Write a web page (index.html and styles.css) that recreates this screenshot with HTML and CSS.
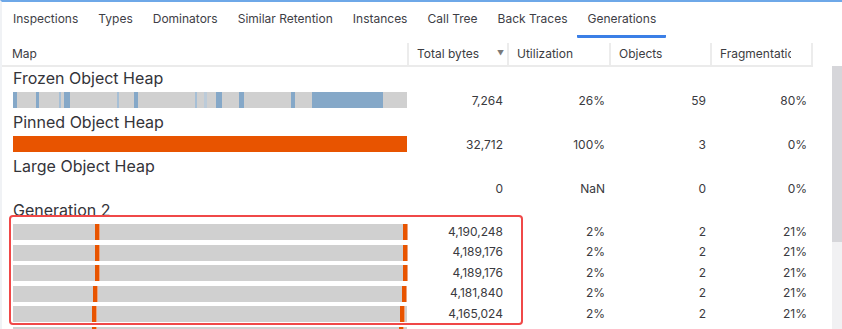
FILE: index.html
```html
<!DOCTYPE html>
<html lang="en">
<head>
    <meta charset="UTF-8">
    <title>Generations</title>
    <link rel="stylesheet" href="styles.css">
</head>
<body>
    <div class="app">
        <nav class="tabs">
            <span class="tab">Inspections</span>
            <span class="tab">Types</span>
            <span class="tab">Dominators</span>
            <span class="tab">Similar Retention</span>
            <span class="tab">Instances</span>
            <span class="tab">Call Tree</span>
            <span class="tab">Back Traces</span>
            <span class="tab active">Generations</span>
        </nav>

        <div class="grid-wrap">
            <div class="table">
                <div class="row head">
                    <div class="th"><span class="label">Map</span></div>
                    <div class="th"><span class="label">Total bytes</span><span class="sort">&#9660;</span></div>
                    <div class="th"><span class="label">Utilization</span></div>
                    <div class="th"><span class="label">Objects</span></div>
                    <div class="th"><span class="label">Fragmentation</span></div>
                </div>

                <div class="group-title">Frozen Object Heap</div>
                <div class="row">
                    <div class="map">
                        <div class="bar">
                            <span class="seg" style="left:0;width:4px"></span>
                            <span class="seg" style="left:23px;width:3px"></span>
                            <span class="seg light" style="left:46px;width:2px"></span>
                            <span class="seg" style="left:51px;width:6px"></span>
                            <span class="seg light" style="left:104px;width:2px"></span>
                            <span class="seg" style="left:121px;width:4px"></span>
                            <span class="seg light" style="left:182px;width:2px"></span>
                            <span class="seg faint" style="left:191px;width:3px"></span>
                            <span class="seg" style="left:203px;width:6px"></span>
                            <span class="seg" style="left:226px;width:5px"></span>
                            <span class="seg" style="left:278px;width:4px"></span>
                            <span class="seg" style="left:299px;width:71px"></span>
                        </div>
                    </div>
                    <div class="num">7,264</div>
                    <div class="num">26%</div>
                    <div class="num">59</div>
                    <div class="num">80%</div>
                </div>

                <div class="group-title">Pinned Object Heap</div>
                <div class="row">
                    <div class="map"><div class="bar full"></div></div>
                    <div class="num">32,712</div>
                    <div class="num">100%</div>
                    <div class="num">3</div>
                    <div class="num">0%</div>
                </div>

                <div class="group-title">Large Object Heap</div>
                <div class="row">
                    <div class="map"></div>
                    <div class="num">0</div>
                    <div class="num">NaN</div>
                    <div class="num">0</div>
                    <div class="num">0%</div>
                </div>

                <div class="group-title">Generation 2</div>
                <div class="row small">
                    <div class="map"><div class="bar"><span class="mark" style="left:82px"></span><span class="mark" style="left:390px"></span></div></div>
                    <div class="num">4,190,248</div>
                    <div class="num">2%</div>
                    <div class="num">2</div>
                    <div class="num">21%</div>
                </div>
                <div class="row small">
                    <div class="map"><div class="bar"><span class="mark" style="left:82px"></span><span class="mark" style="left:390px"></span></div></div>
                    <div class="num">4,189,176</div>
                    <div class="num">2%</div>
                    <div class="num">2</div>
                    <div class="num">21%</div>
                </div>
                <div class="row small">
                    <div class="map"><div class="bar"><span class="mark" style="left:82px"></span><span class="mark" style="left:390px"></span></div></div>
                    <div class="num">4,189,176</div>
                    <div class="num">2%</div>
                    <div class="num">2</div>
                    <div class="num">21%</div>
                </div>
                <div class="row small">
                    <div class="map"><div class="bar"><span class="mark" style="left:80px"></span><span class="mark" style="left:389px"></span></div></div>
                    <div class="num">4,181,840</div>
                    <div class="num">2%</div>
                    <div class="num">2</div>
                    <div class="num">21%</div>
                </div>
                <div class="row small">
                    <div class="map"><div class="bar"><span class="mark" style="left:79px"></span><span class="mark" style="left:387px"></span></div></div>
                    <div class="num">4,165,024</div>
                    <div class="num">2%</div>
                    <div class="num">2</div>
                    <div class="num">21%</div>
                </div>
                <div class="row small">
                    <div class="map"><div class="bar"><span class="mark" style="left:79px"></span><span class="mark" style="left:386px"></span></div></div>
                    <div class="num"></div>
                    <div class="num"></div>
                    <div class="num"></div>
                    <div class="num"></div>
                </div>
            </div>

            <div class="scrollbar"><div class="thumb"></div></div>
        </div>

        <div class="highlight"></div>
    </div>
</body>
</html>
```

FILE: styles.css
```css
* {
    margin: 0;
    padding: 0;
    box-sizing: border-box;
    font-family: 'Inter', 'Noto Sans', sans-serif;
}

body {
    background: #fff;
    color: #3a3a3f;
    overflow: hidden;
    height: 329px;
}

.app {
    position: relative;
    border-top: 2px solid #6ea8e8;
    border-left: 2px solid #f0f2f5;
    height: 100%;
}

.tabs {
    display: flex;
    padding-left: 1px;
    height: 36px;
}

.tab {
    padding: 0 10px;
    font-size: 12px;
    line-height: 33px;
    color: #3e3e46;
    border-bottom: 3px solid transparent;
    white-space: nowrap;
}

.tab.active {
    border-bottom-color: #3b7fe6;
    border-radius: 0 0 1px 1px;
}

.grid-wrap {
    display: flex;
    justify-content: space-between;
    margin-top: 5px;
}

.table {
    width: 811px;
}

.row {
    display: grid;
    grid-template-columns: 407px 100px 102px 101px 101px;
    height: 22px;
    align-items: center;
}

.row.small {
    height: 20.5px;
}

.head {
    height: 24px;
    border-bottom: 2px solid #ebebeb;
}

.th {
    height: 22px;
    line-height: 22px;
    font-size: 12px;
    color: #3c3c42;
    padding: 0 20px 0 8px;
    border-right: 2px solid #ececec;
    position: relative;
}

.th:first-child {
    padding-left: 10px;
}

.label {
    display: block;
    overflow: hidden;
    white-space: nowrap;
}

.sort {
    position: absolute;
    right: 3px;
    top: 0;
    font-size: 7px;
    color: #7a7a7a;
}

.group-title {
    height: 22px;
    line-height: 22px;
    font-size: 16px;
    padding-left: 11px;
    color: #34343a;
}

.map {
    padding: 0 0 0 11px;
    height: 100%;
    display: flex;
    align-items: center;
}

.small .map {
    align-items: flex-start;
    padding-top: 3px;
}

.bar {
    position: relative;
    width: 394px;
    height: 16px;
    background: #d0d0d0;
}

.bar.full {
    background: #e85400;
}

.seg {
    position: absolute;
    top: 0;
    height: 100%;
    background: #85a8c8;
}

.seg.light {
    background: #a6bfd6;
}

.seg.faint {
    background: #bccbd9;
}

.mark {
    position: absolute;
    top: 0;
    height: 100%;
    width: 4px;
    background: #e85400;
    box-shadow: 1px 0 0 #eea27a;
}

.num {
    text-align: right;
    padding-right: 6px;
    font-size: 12px;
    color: #3a3a40;
}

.scrollbar {
    width: 10px;
    height: 266px;
    margin-top: 23px;
    background: #f1f1f3;
}

.thumb {
    height: 176px;
    background: #d6d6da;
}

.highlight {
    position: absolute;
    left: 7px;
    top: 213px;
    width: 514px;
    height: 110px;
    border: 2px solid #f04848;
    border-radius: 4px;
}
```
